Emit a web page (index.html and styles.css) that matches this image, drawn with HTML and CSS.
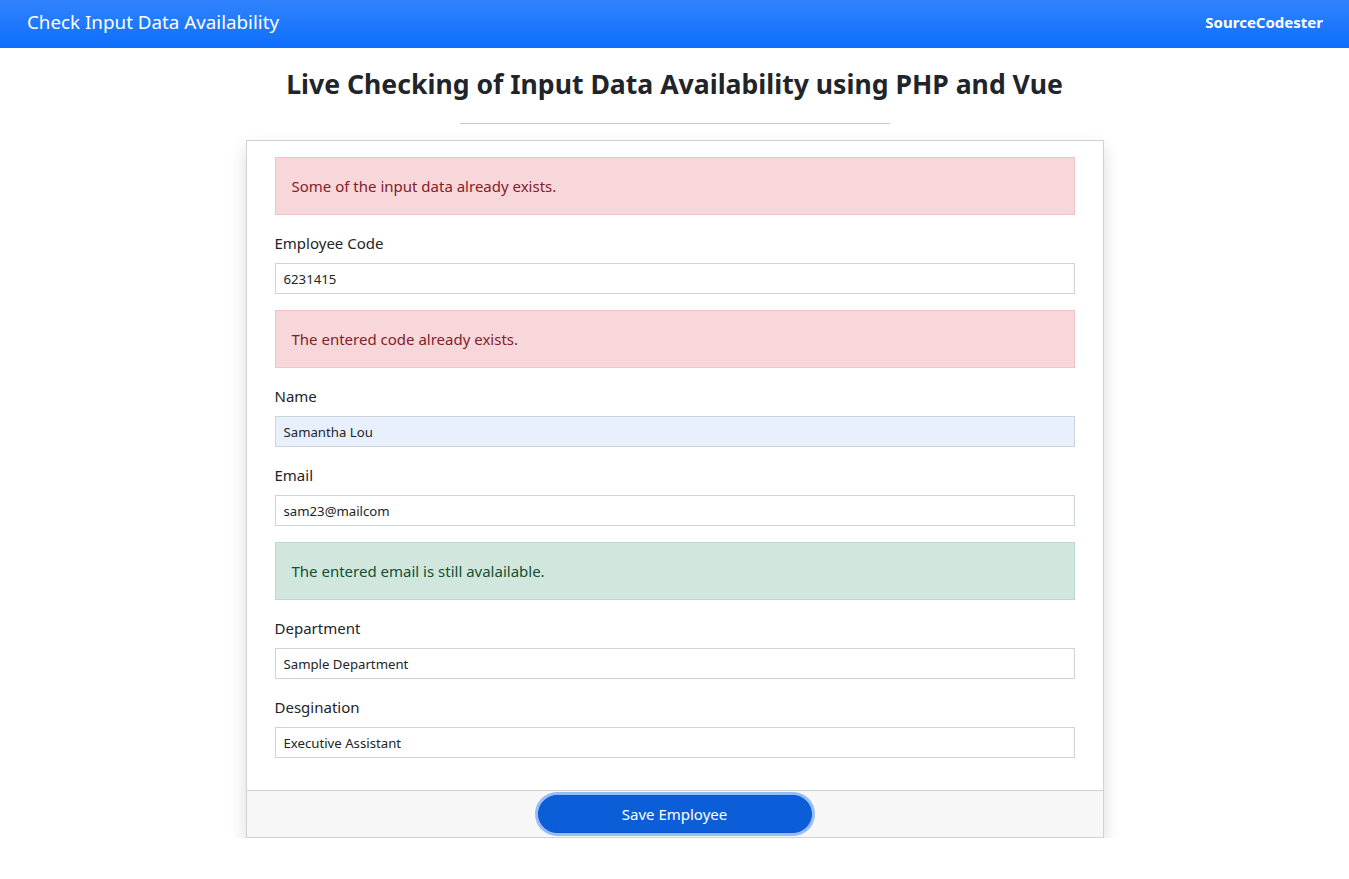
FILE: index.html
```html
<!DOCTYPE html>
<html lang="en">
<head>
<meta charset="utf-8">
<title>Check Input Data Availability</title>
<link rel="stylesheet" href="styles.css">
</head>
<body>
<nav class="navbar">
  <span class="brand">Check Input Data Availability</span>
  <span class="site">SourceCodester</span>
</nav>
<main class="page">
  <h3 class="title">Live Checking of Input Data Availability using PHP and Vue</h3>
  <hr class="divider">
  <div class="card">
    <div class="card-body">
      <div class="alert alert-danger">Some of the input data already exists.</div>
      <div class="field">
        <label class="label">Employee Code</label>
        <input class="input" type="text" value="6231415">
      </div>
      <div class="alert alert-danger">The entered code already exists.</div>
      <div class="field">
        <label class="label">Name</label>
        <input class="input input-autofill" type="text" value="Samantha Lou">
      </div>
      <div class="field">
        <label class="label">Email</label>
        <input class="input" type="text" value="sam23@mailcom">
      </div>
      <div class="alert alert-success">The entered email is still avalailable.</div>
      <div class="field">
        <label class="label">Department</label>
        <input class="input" type="text" value="Sample Department">
      </div>
      <div class="field">
        <label class="label">Desgination</label>
        <input class="input" type="text" value="Executive Assistant">
      </div>
    </div>
    <div class="card-footer">
      <button class="btn" type="button">Save Employee</button>
    </div>
  </div>
</main>
</body>
</html>
```

FILE: styles.css
```css
* { box-sizing: border-box; }
html, body { margin: 0; padding: 0; }
body {
  font-family: "Noto Sans", "Open Sans", sans-serif;
  font-size: 15px;
  line-height: 24px;
  color: #212529;
  background: #fff;
}
.navbar {
  height: 48px;
  display: flex;
  align-items: center;
  justify-content: space-between;
  padding: 0 26px 4px 27px;
  background-color: #0d6efd;
  background-image: linear-gradient(180deg, rgba(255,255,255,.15), rgba(255,255,255,0));
  color: #fff;
}
.brand { font-size: 18.8px; line-height: 30px; }
.site { font-size: 15px; font-weight: 700; }
.page {
  display: flex;
  flex-direction: column;
  align-items: center;
  padding-top: 19px;
}
.title {
  margin: 0;
  font-size: 26.6px;
  font-weight: 700;
  line-height: 34px;
}
.divider {
  width: 430px;
  margin: 22px 0 16px;
  border: 0;
  border-top: 1px solid #c8c8c8;
  height: 0;
}
.card {
  width: 858px;
  border: 1px solid #d2d2d2;
  background: #fff;
  box-shadow: 0 8px 16px rgba(0,0,0,.15);
}
.card-body {
  padding: 16px 28px 32px;
  display: flex;
  flex-direction: column;
  gap: 16px;
}
.alert {
  padding: 16px;
  border: 1px solid transparent;
  height: 58px;
}
.alert-danger { background: #f8d7da; border-color: #f5c2c7; color: #842029; }
.alert-success { background: #d1e7dd; border-color: #badbcc; color: #0f5132; }
.field { display: flex; flex-direction: column; }
.label { margin-bottom: 8px; }
.input {
  height: 31px;
  padding: 4px 8px;
  font-family: inherit;
  font-size: 13.2px;
  line-height: 21px;
  color: #212529;
  background: #fff;
  border: 1px solid #ced4da;
  border-radius: 0;
  outline: none;
}
.input-autofill { background: #e8f0fe; }
.card-footer {
  border-top: 1px solid #d2d2d2;
  background: #f7f7f7;
  padding: 4px 16px;
  display: flex;
  justify-content: center;
}
.btn {
  width: 274px;
  height: 38px;
  border: 1px solid #0a58ca;
  border-radius: 50rem;
  background: #0b5ed7;
  color: #fff;
  font-family: inherit;
  font-size: 15px;
  box-shadow: 0 0 0 3px rgba(49,132,253,.5);
}
```
